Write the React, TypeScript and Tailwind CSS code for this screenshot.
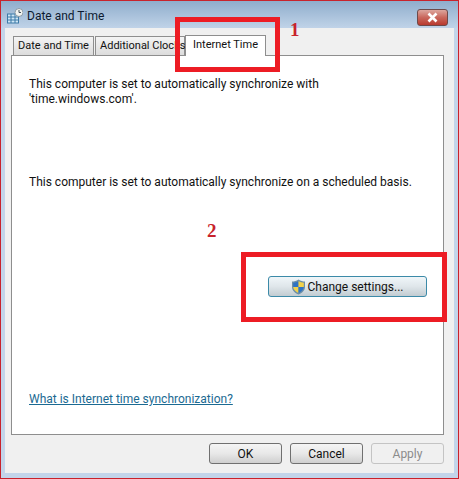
import React from 'react';

const font = "font-['Roboto','Noto_Sans',sans-serif]";

function Shield() {
  return (
    <svg width="15" height="16" viewBox="0 0 15 16" className="shrink-0">
      <path d="M7.5 0.5 C5.5 2 3 2.6 1 2.6 L1 8 C1 11.5 4 14 7.5 15.5 C11 14 14 11.5 14 8 L14 2.6 C12 2.6 9.5 2 7.5 0.5 Z" fill="#6d8fa8" />
      <path d="M7.5 2 L7.5 8 L2.2 8 L2.2 3.7 C4 3.6 6 3 7.5 2 Z" fill="#2f73c4" />
      <path d="M7.5 2 C9 3 11 3.6 12.8 3.7 L12.8 8 L7.5 8 Z" fill="#f2d24a" />
      <path d="M2.2 8 L7.5 8 L7.5 14 C4.8 12.8 2.4 10.8 2.2 8 Z" fill="#f2d24a" />
      <path d="M7.5 8 L12.8 8 C12.6 10.8 10.2 12.8 7.5 14 Z" fill="#2f73c4" />
    </svg>
  );
}

function CalendarIcon() {
  return (
    <svg width="16" height="16" viewBox="0 0 16 16">
      <rect x="0.5" y="6" width="11" height="9" fill="#cfe6f5" stroke="#3d7ba8" />
      <path d="M0.5 9 H11.5 M0.5 12 H11.5 M4 6 V15 M8 6 V15" stroke="#3d7ba8" strokeWidth="1" />
      <circle cx="12" cy="4.5" r="4" fill="#f4f4f0" stroke="#8a9aa6" />
      <path d="M12 2 V4.5 H14" stroke="#44525c" fill="none" />
    </svg>
  );
}

function CloseButton() {
  return (
    <div className="w-[31px] h-[17px] rounded-[3px] border border-[#6e4a4a] bg-gradient-to-b from-[#dca69e] via-[#c9675c] to-[#b8392e] flex items-center justify-center mt-[8px]">
      <svg width="13" height="11" viewBox="0 0 13 11">
        <path d="M2.5 1.5 L10.5 9.5 M10.5 1.5 L2.5 9.5" stroke="#ffffff" strokeWidth="2.6" />
      </svg>
    </div>
  );
}

function Tab({ label, className }: { label: string; className: string }) {
  return (
    <div className={`h-[19px] border border-b-0 border-[#8e8e8e] flex items-center justify-center text-[11px] text-[#111] whitespace-nowrap ${className}`}>
      {label}
    </div>
  );
}

function DialogButton({ label, disabled }: { label: string; disabled?: boolean }) {
  return (
    <div className={`w-[73px] h-[21px] rounded-[3px] border flex items-center justify-center text-[12px] ${disabled ? 'border-[#c4c4c4] bg-[#f0f0f0] text-[#8b8b8b]' : 'border-[#707070] bg-gradient-to-b from-[#f5f5f5] via-[#e8e8e8] to-[#cfcfcf] text-[#111]'}`}>
      {label}
    </div>
  );
}

export default function App() {
  return (
    <div className={`relative w-[459px] h-[479px] overflow-hidden border border-[#c8232c] bg-[#c3d5ea] flex flex-col ${font}`}>
      <div className="h-[27px] shrink-0 bg-gradient-to-b from-[#8fadcc] to-[#c0d3e8] flex items-start justify-between pl-[6px] pr-[10px]">
        <div className="flex items-center gap-[4px] h-[27px] mt-px">
          <CalendarIcon />
          <span className="text-[12px] text-[#0c1a30]">Date and Time</span>
        </div>
        <CloseButton />
      </div>

      <div className="flex-1 mx-[4px] mb-[5px] bg-[#f0f0f0] px-[6px] pt-[7px] flex flex-col">
        <div className="flex items-end h-[20px] pl-[2px]">
          <Tab label="Date and Time" className="w-[81px] mr-px pt-px bg-gradient-to-b from-[#f4f4f4] to-[#dcdcdc]" />
          <Tab label="Additional Clocks" className="w-[90px] justify-start pl-[4px] pt-px bg-gradient-to-b from-[#f4f4f4] to-[#dcdcdc]" />
          <Tab label="Internet Time" className="w-[81px] h-[21px] pb-px bg-white -mb-px relative z-10" />
        </div>

        <div className="w-[433px] h-[380px] border border-[#8e8e8e] bg-white flex flex-col pl-[17px] text-[12px] leading-[15px] text-[#111]">
          <p className="mt-[21px]">
            This computer is set to automatically synchronize with
            <br />
            'time.windows.com'.
          </p>
          <p className="mt-[68px]">This computer is set to automatically synchronize on a scheduled basis.</p>
          <div className="mt-[86px] ml-[239px] w-[159px] h-[21px] rounded-[3px] border border-[#3c8aa8] bg-gradient-to-b from-[#f0f6f9] via-[#dfe6ea] to-[#c2ccd2] flex items-center justify-center gap-px">
            <Shield />
            <span className="text-[#111] text-[12px] pt-px">Change settings...</span>
          </div>
          <a className="mt-[95px] w-fit text-[#1b6a92] underline">What is Internet time synchronization?</a>
        </div>

        <div className="flex justify-end gap-[8px] mt-[8px] mr-[1px] w-[433px]">
          <DialogButton label="OK" />
          <DialogButton label="Cancel" />
          <DialogButton label="Apply" disabled />
        </div>
      </div>

      {/* annotations drawn over the dialog */}
      <div className="absolute left-[174px] top-[16px] w-[105px] h-[55px] border-[5px] border-[#ed1c24]" />
      <div className="absolute left-[240px] top-[251px] w-[206px] h-[70px] border-[5px] border-[#ed1c24]" />
      <span className="absolute left-[289px] top-[15px] text-[19px] font-bold text-[#c8232c] font-['Liberation_Serif',serif]">1</span>
      <span className="absolute left-[206px] top-[216px] text-[19px] font-bold text-[#c8232c] font-['Liberation_Serif',serif]">2</span>
    </div>
  );
}
